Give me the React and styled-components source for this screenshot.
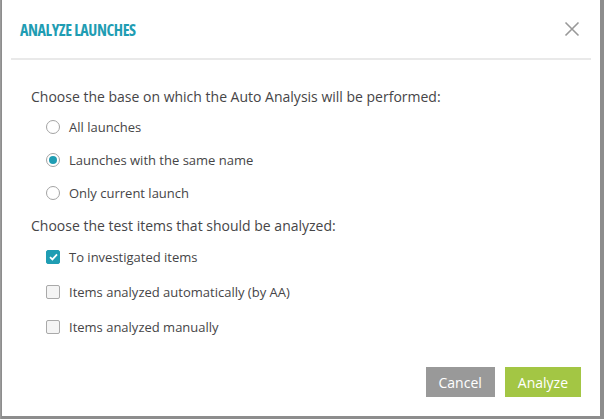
import React, { useState } from 'react'
import styled, { createGlobalStyle } from 'styled-components'

const GlobalStyle = createGlobalStyle`
  html, body {
    margin: 0;
    padding: 0;
    height: 100%;
    background: #8d8d8d;
    overflow: hidden;
  }
  #root {
    height: 100%;
  }
  * {
    box-sizing: border-box;
  }
`

const Backdrop = styled.div`
  height: 100%;
  padding: 0 4px 3px 1px;
  border-left: 1px solid #9a9a9a;
`

const Modal = styled.div`
  height: 416px;
  width: 598px;
  background: #fff;
  display: flex;
  flex-direction: column;
  font-family: 'Open Sans', 'Noto Sans', sans-serif;
  color: #464547;
`

const Header = styled.div`
  display: flex;
  align-items: center;
  justify-content: space-between;
  height: 60px;
  margin: 0 9px;
  padding: 0 11px 0 9px;
  border-bottom: 2px solid #e9e9e9;
`

const Title = styled.h1`
  margin: 0;
  padding-top: 2px;
  font-size: 16px;
  font-weight: 700;
  font-stretch: 75%;
  letter-spacing: -0.4px;
  color: #1f9db3;
  text-transform: uppercase;
`

const CloseButton = styled.button`
  border: none;
  background: none;
  padding: 0;
  width: 16px;
  height: 16px;
  display: flex;
  cursor: pointer;
`

const Body = styled.div`
  flex: 1;
  padding: 27px 28px 0 29px;
  display: flex;
  flex-direction: column;
`

const Question = styled.p`
  margin: 0;
  font-size: 14px;
  line-height: 20px;
  color: #464547;
`

const OptionList = styled.div`
  display: flex;
  flex-direction: column;
  padding-left: 15px;
  margin-top: ${p => p.$top}px;
  margin-bottom: ${p => p.$bottom}px;
  gap: ${p => p.$gap}px;
`

const Option = styled.label`
  display: flex;
  align-items: center;
  gap: ${p => p.$gap}px;
  font-size: 13px;
  line-height: 18px;
  color: #464547;
  cursor: pointer;
`

const RadioCircle = styled.span`
  width: 14px;
  height: 14px;
  border-radius: 50%;
  border: 1px solid #a3a3a3;
  background: #fff;
  display: flex;
  align-items: center;
  justify-content: center;
  flex-shrink: 0;

  &::after {
    content: '';
    width: 8px;
    height: 8px;
    border-radius: 50%;
    background: ${p => (p.$checked ? '#1f9db3' : 'transparent')};
  }
`

const Box = styled.span`
  width: 14px;
  height: 14px;
  border-radius: 2px;
  border: 1px solid ${p => (p.$checked ? '#1f9db3' : '#a9a9a9')};
  background: ${p => (p.$checked ? '#1f9db3' : '#f4f4f4')};
  display: flex;
  align-items: center;
  justify-content: center;
  flex-shrink: 0;
`

const Footer = styled.div`
  display: flex;
  justify-content: flex-end;
  gap: 10px;
  padding: 0 19px 19px 0;
`

const Button = styled.button`
  height: 30px;
  padding: 0 ${p => p.$pad}px;
  border: none;
  border-radius: 0;
  font-family: 'Open Sans', 'Noto Sans', sans-serif;
  font-size: 14px;
  color: #fff;
  background: ${p => p.$bg};
  cursor: pointer;
`

const bases = ['All launches', 'Launches with the same name', 'Only current launch']
const items = [
  'To investigated items',
  'Items analyzed automatically (by AA)',
  'Items analyzed manually',
]

const Radio = ({ label, checked, onSelect }) => (
  <Option $gap={9} onClick={onSelect}>
    <RadioCircle $checked={checked} />
    {label}
  </Option>
)

const Checkbox = ({ label, checked, onToggle }) => (
  <Option $gap={9} onClick={onToggle}>
    <Box $checked={checked}>
      {checked ? (
        <svg width="9" height="8" viewBox="0 0 9 8">
          <path d="M1 4.2 L3.4 6.4 L8 1.4" fill="none" stroke="#fff" strokeWidth="1.8" />
        </svg>
      ) : null}
    </Box>
    {label}
  </Option>
)

export default function App() {
  const [base, setBase] = useState(1)
  const [checked, setChecked] = useState([true, false, false])

  const toggle = i => setChecked(c => c.map((v, j) => (j === i ? !v : v)))

  return (
    <Backdrop>
      <GlobalStyle />
      <Modal>
        <Header>
          <Title>Analyze launches</Title>
          <CloseButton aria-label="Close">
            <svg width="16" height="16" viewBox="0 0 16 16">
              <path d="M1.5 1.5 L14.5 14.5 M14.5 1.5 L1.5 14.5" stroke="#999" strokeWidth="1.6" />
            </svg>
          </CloseButton>
        </Header>
        <Body>
          <Question>Choose the base on which the Auto Analysis will be performed:</Question>
          <OptionList $top={11} $bottom={14} $gap={15}>
            {bases.map((b, i) => (
              <Radio key={b} label={b} checked={base === i} onSelect={() => setBase(i)} />
            ))}
          </OptionList>
          <Question>Choose the test items that should be analyzed:</Question>
          <OptionList $top={12} $bottom={0} $gap={17}>
            {items.map((it, i) => (
              <Checkbox key={it} label={it} checked={checked[i]} onToggle={() => toggle(i)} />
            ))}
          </OptionList>
        </Body>
        <Footer>
          <Button $bg="#999" $pad={13}>Cancel</Button>
          <Button $bg="#a3c644" $pad={13}>Analyze</Button>
        </Footer>
      </Modal>
    </Backdrop>
  )
}
